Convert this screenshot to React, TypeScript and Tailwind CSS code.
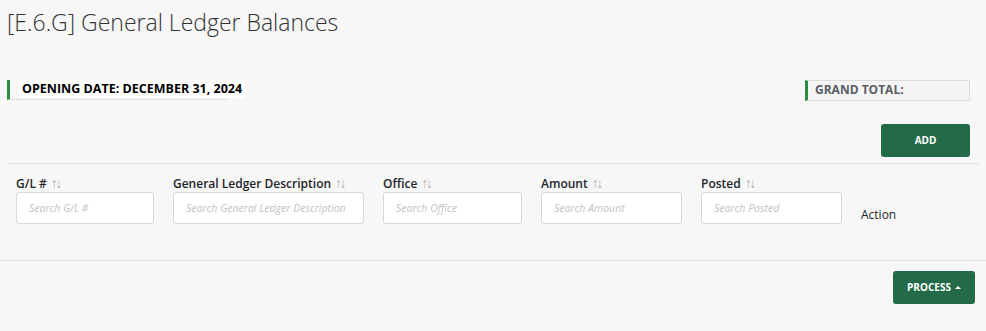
import React from "react";

const FONT = { fontFamily: '"Open Sans", "Noto Sans", "Liberation Sans", sans-serif' };

const COLUMNS = [
  { label: "G/L #", placeholder: "Search G/L #", width: "w-[157px]" },
  { label: "General Ledger Description", placeholder: "Search General Ledger Description", width: "w-[210px]" },
  { label: "Office", placeholder: "Search Office", width: "w-[158px]" },
  { label: "Amount", placeholder: "Search Amount", width: "w-[160px]" },
  { label: "Posted", placeholder: "Search Posted", width: "w-[160px]" },
];

function SortIcon() {
  return <span className="ml-[4px] text-[14px] leading-[14px] tracking-[-2.5px] text-[#b0b0b0]">↑↓</span>;
}

export default function App() {
  return (
    <div className="h-[331px] w-[986px] overflow-hidden bg-[#f7f7f7] text-[#212529]" style={FONT}>
      <h1 className="pl-[7px] pt-[5px] text-[23px] font-light leading-[34px] text-[#333]">
        [E.6.G] General Ledger Balances
      </h1>

      <div className="mt-[41px] flex items-start justify-between pl-[7px] pr-[16px]">
        <div className="flex h-[20px] w-[220px] items-start border-b border-l-[3px] border-b-[#dcdcdc] border-l-[#2e8b3e]">
          <span className="ml-[9px] block h-[18px] shrink-0 whitespace-nowrap bg-white px-[3px] text-[12.5px] font-bold leading-[17px] text-black">
            OPENING DATE: DECEMBER 31, 2024
          </span>
        </div>
        <div className="flex h-[21px] w-[165px] items-start border border-l-[3px] border-[#dcdcdc] border-l-[#2e8b3e] bg-[#f5f5f5]">
          <span className="ml-[7px] text-[12px] font-bold leading-[18px] text-[#585e66]">GRAND TOTAL:</span>
        </div>
      </div>

      <div className="mt-[23px] flex justify-end pr-[16px]">
        <button className="h-[33px] w-[89px] rounded-[3px] bg-[#236a48] text-[10px] font-bold text-white">
          ADD
        </button>
      </div>

      <div className="mx-[7px] mt-[6px] border-t border-[#e2e2e2]">
        <div className="flex pt-[12px]">
          {COLUMNS.map((c) => (
            <div key={c.label} className={`${c.width} shrink-0 px-[9px]`}>
              <div className="flex h-[16px] items-baseline text-[12px] font-semibold leading-[16px]">
                {c.label}
                <SortIcon />
              </div>
              <input
                placeholder={c.placeholder}
                className="h-[32px] w-[calc(100%-1px)] rounded-[3px] border border-[#d5d8dc] bg-white px-[12px] text-[10.5px] italic placeholder:text-[#c2c2c2]"
              />
            </div>
          ))}
          <div className="flex items-end pl-[9px] text-[12px] leading-[18px]">Action</div>
        </div>
      </div>

      <div className="mt-[36px] border-t border-[#e0e0e0]">
        <div className="flex justify-end pr-[11px] pt-[10px]">
          <button className="flex h-[33px] w-[82px] items-center justify-center gap-[4px] rounded-[3px] bg-[#236a48] text-[10px] font-bold text-white">
            PROCESS
            <span className="h-0 w-0 border-x-[3px] border-b-[3px] border-x-transparent border-b-white" />
          </button>
        </div>
      </div>
    </div>
  );
}
